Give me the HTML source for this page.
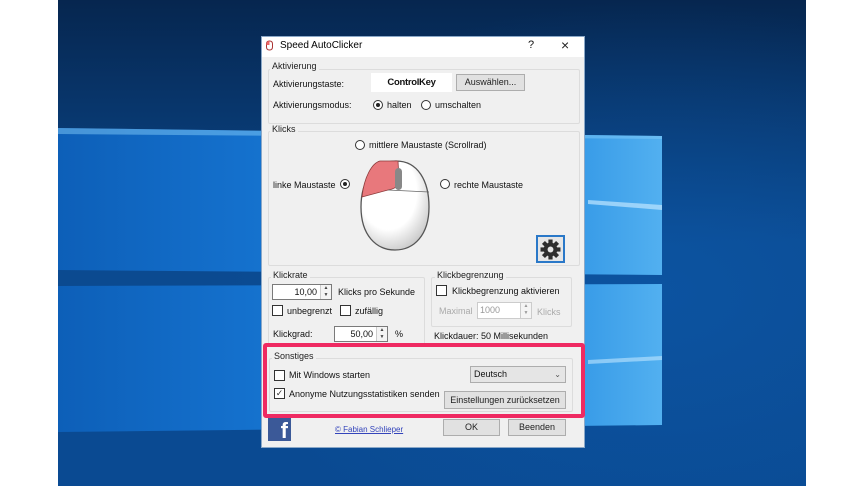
<!DOCTYPE html>
<html><head><meta charset="utf-8"><style>
*{margin:0;padding:0;box-sizing:border-box}
body{width:864px;height:486px;position:relative;background:#fff;overflow:hidden;font-family:"Liberation Sans",sans-serif;font-size:9px;color:#111}
.a{position:absolute;white-space:nowrap}
.grp{position:absolute;border:1px solid #dcdcdc;border-radius:2px}
.gl{position:absolute;background:#f0f0f0;padding:0 2px;font-size:9px;color:#222}
.rad{position:absolute;width:10px;height:10px;border:1px solid #333;border-radius:50%;background:#fff}
.rad.on::after{content:"";position:absolute;left:2px;top:2px;width:4px;height:4px;border-radius:50%;background:#222}
.cb{position:absolute;width:11px;height:11px;border:1px solid #333;background:#fff}
.btn{position:absolute;background:#e1e1e1;border:1px solid #adadad;text-align:center;font-size:9px;color:#222}
.inp{position:absolute;background:#fff;border:1px solid #7a7a7a;text-align:right;padding-right:14px;font-size:9px}
.spin{position:absolute;right:0;top:0;bottom:0;width:11px;border-left:1px solid #ccc;background:#f4f4f4;font-size:5px;line-height:7px;text-align:center;color:#444}
</style></head><body>
<svg class="a" style="left:58px;top:0" width="748" height="486">
<defs>
<linearGradient id="bg" x1="0" y1="0" x2="0" y2="1"><stop offset="0" stop-color="#06264f"/><stop offset=".5" stop-color="#0b4a90"/><stop offset="1" stop-color="#0a4a92"/></linearGradient>
<linearGradient id="pn" x1="0" y1="0" x2="1" y2="0"><stop offset="0" stop-color="#0d5fb8"/><stop offset=".3" stop-color="#1470cc"/><stop offset=".75" stop-color="#2189e0"/><stop offset="1" stop-color="#52b0f0"/></linearGradient>
<radialGradient id="gl" cx=".8" cy=".6" r=".6"><stop offset="0" stop-color="#0d5cb0"/><stop offset="1" stop-color="#0d5cb0" stop-opacity="0"/></radialGradient>
</defs>
<rect width="748" height="486" fill="url(#bg)"/>
<rect width="748" height="486" fill="url(#gl)" opacity=".5"/>
<polygon points="0,128 604,136 604,275 0,270" fill="url(#pn)"/>
<polygon points="0,286 604,284 604,425 0,432" fill="url(#pn)"/>
<polygon points="0,128 604,136 604,139 0,134" fill="#7fcaf8" opacity=".5"/>
<polygon points="530,200 604,205 604,210 530,204" fill="#bfe6ff" opacity=".7"/>
<polygon points="530,360 604,356 604,360 530,364" fill="#bfe6ff" opacity=".6"/>
</svg>
<!-- dialog -->
<div class="a" style="left:261px;top:36px;width:324px;height:412px;background:#f0f0f0;border:1px solid #8aa8c8"></div>
<div class="a" style="left:262px;top:37px;width:322px;height:20px;background:#fff"></div>
<svg class="a" style="left:265px;top:40px" width="9" height="11"><path d="M1.5 4 Q1.5 1 4.5 1 Q7.5 1 7.5 4 V7 Q7.5 10 4.5 10 Q1.5 10 1.5 7Z" fill="#fff" stroke="#a33" stroke-width="1"/><path d="M1.5 4 Q1.5 1 4.5 1 V5 H1.5Z" fill="#e66"/></svg>
<div class="a" style="left:280px;top:40px;font-size:10px;color:#000">Speed AutoClicker</div>
<div class="a" style="left:528px;top:39px;font-size:11px">?</div>
<div class="a" style="left:561px;top:37px;font-size:14px;color:#222">×</div>

<div class="grp" style="left:268px;top:69px;width:312px;height:55px"></div>
<div class="gl" style="left:270px;top:61px">Aktivierung</div>
<div class="a" style="left:273px;top:79px">Aktivierungstaste:</div>
<div class="a" style="left:371px;top:73px;width:81px;height:19px;background:#fff;text-align:center;line-height:19px;font-weight:bold;font-size:9.5px;letter-spacing:-.3px">ControlKey</div>
<div class="btn" style="left:456px;top:74px;width:69px;height:17px;line-height:15px">Auswählen...</div>
<div class="a" style="left:273px;top:100px">Aktivierungsmodus:</div>
<div class="rad on" style="left:373px;top:100px"></div><div class="a" style="left:387px;top:100px">halten</div>
<div class="rad" style="left:421px;top:100px"></div><div class="a" style="left:435px;top:100px">umschalten</div>

<div class="grp" style="left:268px;top:131px;width:312px;height:135px"></div>
<div class="gl" style="left:270px;top:124px">Klicks</div>
<div class="rad" style="left:355px;top:140px"></div><div class="a" style="left:369px;top:140px">mittlere Maustaste (Scrollrad)</div>
<div class="a" style="left:273px;top:180px">linke Maustaste</div>
<div class="rad on" style="left:340px;top:179px"></div>
<div class="rad" style="left:440px;top:179px"></div><div class="a" style="left:454px;top:180px">rechte Maustaste</div>
<svg class="a" style="left:358px;top:157px" width="76" height="98">
<defs><radialGradient id="m" cx=".4" cy=".35" r=".7"><stop offset=".6" stop-color="#fff"/><stop offset="1" stop-color="#c8c8c8"/></radialGradient></defs>
<path d="M38 4 C60 4 71 24 71 50 C71 78 56 93 37 93 C18 93 3 78 3 50 C3 24 16 4 38 4Z" fill="url(#m)" stroke="#555" stroke-width="1.3"/>
<path d="M4 40 C6 20 14 6 22 4 L40 4 L41 22 C41 30 36 32 30 33 L4 40Z" fill="#e8787c" stroke="#8a3a3a" stroke-width=".8"/>
<path d="M30 33 L71 35" stroke="#666" stroke-width=".8" fill="none"/>
<rect x="37" y="11" width="7" height="22" rx="3.5" fill="#888"/>
</svg>
<div class="a" style="left:536px;top:235px;width:29px;height:28px;border:2px solid #2a78c8;background:#e6e6e6"></div>
<svg class="a" style="left:540px;top:239px" width="21" height="21" viewBox="-10 -10 20 20"><g fill="#2e2e2e"><circle r="6.5"/><rect x="-2" y="-9.5" width="4" height="19"/><rect x="-2" y="-9.5" width="4" height="19" transform="rotate(45)"/><rect x="-2" y="-9.5" width="4" height="19" transform="rotate(90)"/><rect x="-2" y="-9.5" width="4" height="19" transform="rotate(135)"/></g><circle r="2.8" fill="#e6e6e6"/></svg>

<div class="grp" style="left:268px;top:277px;width:157px;height:72px"></div>
<div class="gl" style="left:271px;top:270px">Klickrate</div>
<div class="inp" style="left:272px;top:284px;width:60px;height:16px;line-height:14px">10,00<div class="spin">▲<br>▼</div></div>
<div class="a" style="left:338px;top:287px">Klicks pro Sekunde</div>
<div class="cb" style="left:272px;top:305px"></div><div class="a" style="left:287px;top:306px">unbegrenzt</div>
<div class="cb" style="left:340px;top:305px"></div><div class="a" style="left:355px;top:306px">zufällig</div>
<div class="a" style="left:273px;top:329px">Klickgrad:</div>
<div class="inp" style="left:334px;top:326px;width:54px;height:16px;line-height:14px">50,00<div class="spin">▲<br>▼</div></div>
<div class="a" style="left:395px;top:329px">%</div>

<div class="grp" style="left:431px;top:277px;width:141px;height:50px"></div>
<div class="gl" style="left:435px;top:270px">Klickbegrenzung</div>
<div class="cb" style="left:436px;top:285px"></div><div class="a" style="left:452px;top:286px">Klickbegrenzung aktivieren</div>
<div class="a" style="left:439px;top:306px;color:#aaa">Maximal</div>
<div class="inp" style="left:477px;top:302px;width:55px;height:17px;border-color:#ccc;text-align:left;padding-left:2px;color:#999;line-height:15px">1000<div class="spin" style="color:#999">▲<br>▼</div></div>
<div class="a" style="left:537px;top:307px;color:#aaa">Klicks</div>
<div class="a" style="left:434px;top:331px">Klickdauer: 50 Millisekunden</div>
<div class="a" style="left:434px;top:342px">Wartezeit: 50 Millisekunden</div>

<!-- sonstiges -->
<div class="a" style="left:263px;top:343px;width:322px;height:75px;border:4px solid #ef2a62;border-radius:3px;background:#f0f0f0"></div>
<div class="grp" style="left:269px;top:358px;width:304px;height:54px"></div>
<div class="gl" style="left:272px;top:351px">Sonstiges</div>
<div class="cb" style="left:274px;top:370px"></div><div class="a" style="left:289px;top:370px">Mit Windows starten</div>
<div class="a" style="left:470px;top:366px;width:96px;height:17px;background:#e5e5e5;border:1px solid #adadad;padding-left:3px;line-height:15px">Deutsch<span style="position:absolute;right:4px;top:0;font-size:8px;color:#555">⌄</span></div>
<div class="cb" style="left:274px;top:388px;font-size:9px;line-height:9px;text-align:center;color:#333">✓</div><div class="a" style="left:289px;top:389px">Anonyme Nutzungsstatistiken senden</div>
<div class="btn" style="left:444px;top:391px;width:122px;height:18px;line-height:16px">Einstellungen zurücksetzen</div>

<div class="a" style="left:268px;top:418px;width:23px;height:23px;background:#3b5998;color:#fff;font-weight:bold;font-size:22px;line-height:26px;text-align:right;padding-right:3px;overflow:hidden">f</div>
<div class="a" style="left:335px;top:425px;color:#3344bb;text-decoration:underline;font-size:8px">© Fabian Schlieper</div>
<div class="btn" style="left:443px;top:419px;width:57px;height:17px;line-height:15px">OK</div>
<div class="btn" style="left:508px;top:419px;width:58px;height:17px;line-height:15px">Beenden</div>
</body></html>
